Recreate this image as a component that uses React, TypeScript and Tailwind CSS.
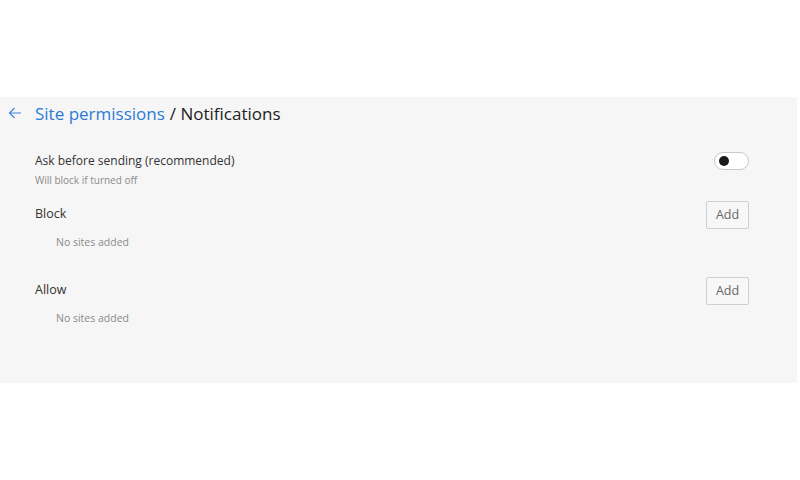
const Row = ({ label }: { label: string }) => (
  <div className="flex flex-col">
    <div className="flex items-center justify-between h-[28px]">
      <span className="text-[12.5px] text-[#333] -mt-[2px]">{label}</span>
      <button className="w-[43px] h-[28px] border border-[#cfcfcf] rounded-[2px] bg-[#f7f7f7] text-[12.5px] text-[#666]">Add</button>
    </div>
    <div className="pl-[21px] mt-[6px] text-[10.5px] text-[#8a8a8a] leading-[14px]">No sites added</div>
  </div>
)

const App = () => {
  return (
    <div className="w-[800px] h-[480px] bg-white pt-[97px]" style={{ fontFamily: '"Open Sans", "Noto Sans", sans-serif' }}>
      <div className="w-[797px] h-[286px] bg-[#f6f6f6] pl-[35px] pr-[48px] relative">
        <svg className="absolute left-[8px] top-[10px]" width="14" height="12" viewBox="0 0 14 12" fill="none" stroke="#3a84d8" strokeWidth="1.1">
          <path d="M13 6H1.5M6.5 1L1.5 6l5 5" />
        </svg>
        <div className="flex items-center h-[34px]">
          <span className="text-[17px] text-[#2b7bd6]">Site permissions</span>
          <span className="text-[17px] text-[#222] ml-[5px]">/ Notifications</span>
        </div>
        <div className="flex items-start justify-between mt-[22px]">
          <div className="flex flex-col">
            <span className="text-[12px] text-[#333] leading-[16px]">Ask before sending (recommended)</span>
            <span className="text-[10px] text-[#8a8a8a] mt-[4px] leading-[14px]">Will block if turned off</span>
          </div>
          <div className="w-[35px] h-[18px] rounded-full border border-[#c8c8c8] bg-white flex items-center pl-[4px] mt-[-1px]">
            <div className="w-[10px] h-[10px] rounded-full bg-[#1a1a1a]" />
          </div>
        </div>
        <div className="mt-[14px]">
          <Row label="Block" />
        </div>
        <div className="mt-[28px]">
          <Row label="Allow" />
        </div>
      </div>
    </div>
  )
}

export default App
